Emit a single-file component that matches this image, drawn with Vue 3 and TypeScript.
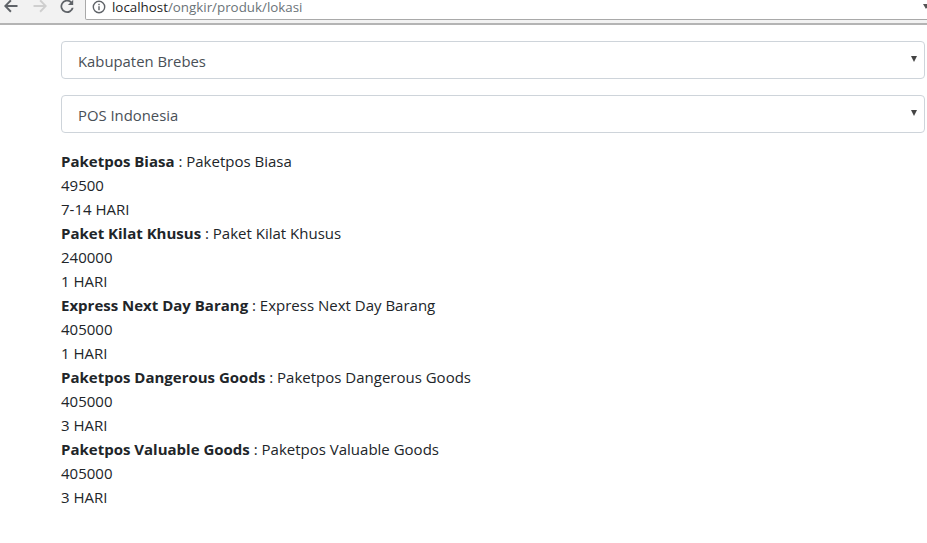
<script setup lang="ts">
interface Item { name: string; price: string; eta: string }
const selects: string[] = ['Kabupaten Brebes', 'POS Indonesia']
const items: Item[] = [
  { name: 'Paketpos Biasa', price: '49500', eta: '7-14 HARI' },
  { name: 'Paket Kilat Khusus', price: '240000', eta: '1 HARI' },
  { name: 'Express Next Day Barang', price: '405000', eta: '1 HARI' },
  { name: 'Paketpos Dangerous Goods', price: '405000', eta: '3 HARI' },
  { name: 'Paketpos Valuable Goods', price: '405000', eta: '3 HARI' },
]
</script>

<template>
  <div class="page">
    <header class="toolbar">
      <div class="nav">
        <svg class="icon back" viewBox="0 0 16 16"><path d="M14.500 7H4.600l4-4L7.200 1.600 1 8l6.200 6.400L8.600 13l-4-4h9.900z" /></svg>
        <svg class="icon fwd" viewBox="0 0 16 16"><path d="M1.500 7h9.900l-4-4 1.400-1.400L15 8l-6.200 6.400L7.400 13l4-4H1.500z" /></svg>
        <svg class="icon reload" viewBox="0 0 16 16"><path d="M13.500 2.500v4.700H8.800l2.100-2.100A4.300 4.300 0 1 0 12.200 9.500h1.700A5.900 5.900 0 1 1 12 3.900z" /></svg>
      </div>
      <div class="omnibox">
        <svg class="info" viewBox="0 0 14 14">
          <circle cx="7" cy="7" r="5.700" fill="none" stroke="#5f6368" stroke-width="1.400" />
          <rect x="6.300" y="6.200" width="1.400" height="4" fill="#5f6368" />
          <rect x="6.300" y="3.800" width="1.400" height="1.400" fill="#5f6368" />
        </svg>
        <span class="url"><span class="host">localhost</span>/ongkir/produk/lokasi</span>
        <span class="caret"></span>
      </div>
    </header>
    <main class="content">
      <div v-for="s in selects" :key="s" class="select">
        <span class="value">{{ s }}</span>
        <span class="arrow"></span>
      </div>
      <div class="results">
        <template v-for="item in items" :key="item.name">
          <div><strong>{{ item.name }}</strong> : {{ item.name }}</div>
          <div>{{ item.price }}</div>
          <div>{{ item.eta }}</div>
        </template>
      </div>
    </main>
  </div>
</template>

<style>
html, body { margin: 0; background: #fff; overflow: hidden; }
</style>

<style scoped>
.page {
  width: 927px;
  height: 543px;
  overflow: hidden;
  font-family: "Open Sans", "Noto Sans", sans-serif;
  color: #212529;
}
.toolbar {
  height: 23px;
  display: flex;
  align-items: flex-start;
  background: #f2f2f2;
  border-bottom: 2px solid #b4b4b4;
}
.nav {
  width: 85px;
  height: 19px;
  flex: none;
  position: relative;
  overflow: hidden;
}
.icon {
  position: absolute;
  top: -2px;
  width: 16px;
  height: 16px;
}
.back { left: 3px; fill: #5f6368; }
.fwd { left: 32px; fill: #cfcfcf; }
.reload { left: 58px; top: -3px; width: 18px; height: 18px; fill: #5f6368; }
.omnibox {
  flex: 1;
  height: 20px;
  margin-right: -4px;
  background: #fff;
  border: 1px solid #a9a9a9;
  border-top: none;
  border-radius: 0 0 2px 2px;
  display: flex;
  align-items: flex-start;
  position: relative;
  box-sizing: border-box;
}
.info {
  width: 14px;
  height: 14px;
  margin: 0 6px 0 6px;
  flex: none;
}
.url {
  font-size: 13.350px;
  line-height: 18px;
  margin-top: -2px;
  color: #6b7378;
}
.host { color: #1f1f1f; }
.caret {
  position: absolute;
  right: 1px;
  top: 4px;
  width: 0;
  height: 0;
  border-left: 3px solid transparent;
  border-right: 3px solid transparent;
  border-top: 5px solid #555;
}
.content {
  padding: 16px 2px 0 61px;
}
.select {
  height: 38px;
  box-sizing: border-box;
  border: 1px solid #ced4da;
  border-radius: 4px;
  background: #fff;
  padding: 0 16px;
  display: flex;
  align-items: center;
  justify-content: space-between;
  color: #495057;
  font-size: 14.850px;
  margin-bottom: 16px;
}
.value { position: relative; top: 1px; }
.arrow {
  width: 0;
  height: 0;
  border-left: 3px solid transparent;
  border-right: 3px solid transparent;
  border-top: 6px solid #444;
  margin-right: -9px;
  margin-top: -2px;
}
.results {
  font-size: 15px;
  line-height: 24px;
}
strong { font-weight: 700; }
</style>
